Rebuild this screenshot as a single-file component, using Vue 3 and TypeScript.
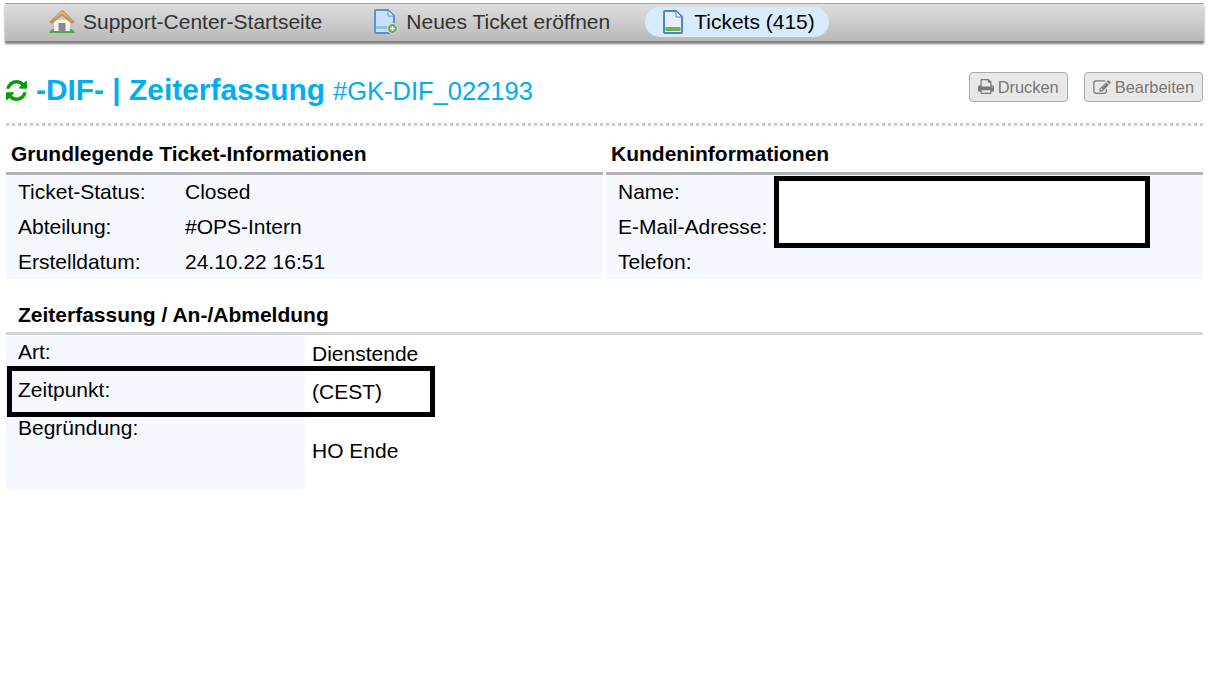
<template>
  <div class="page">
    <nav class="nav">
      <a class="nav-item">
        <svg class="nav-icon" viewBox="0 0 26 23" width="26" height="23">
          <path d="M0 23 q3 -5 6 -4 h14 q3 -1 6 4z" fill="#4fa84a" />
          <rect x="5" y="10" width="16" height="11" fill="#f7f5ef" />
          <rect x="9.500" y="13" width="7" height="9" fill="#86888a" />
          <path d="M13 0 h1 L26 12 L23 14 L13 6 L3 14 L0 12z" fill="#c4965c" />
          <path d="M13 1 L4 9.500 L13 3.500 L22 9.500z" fill="#dcb987" />
        </svg>
        <span>Support-Center-Startseite</span>
      </a>
      <a class="nav-item">
        <svg class="nav-icon" viewBox="0 0 24 25" width="24" height="25">
          <path d="M1 2 q0 -1 1 -1 H14 L20 7 V23 q0 1 -1 1 H2 q-1 0 -1 -1z" fill="#c9e0f7" stroke="#5d92d2" stroke-width="2" />
          <path d="M14 1 V7 H20z" fill="#f2f8fe" stroke="#5d92d2" />
          <rect x="2" y="17" width="17" height="3" fill="#97c0ea" />
          <circle cx="18.500" cy="19.500" r="5" fill="#6cae5c" stroke="#dff0da" />
          <path d="M18.500 17 V22 M16 19.500 H21" stroke="#fff" stroke-width="1.500" />
        </svg>
        <span>Neues Ticket eröffnen</span>
      </a>
      <a class="nav-item active">
        <svg class="nav-icon" viewBox="0 0 20 24" width="20" height="24">
          <path d="M1 2 q0 -1 1 -1 H13 L19 7 V22 q0 1 -1 1 H2 q-1 0 -1 -1z" fill="#e4f0fb" stroke="#4d84c4" stroke-width="2" />
          <path d="M13 1 V7 H19z" fill="#f8fbfe" stroke="#4d84c4" />
          <rect x="2.500" y="17" width="15" height="4" fill="#76ad4e" />
        </svg>
        <span>Tickets ({{ ticketCount }})</span>
      </a>
    </nav>

    <header class="title-row">
      <h1 class="title">
        <svg class="refresh" viewBox="0 0 1536 1536" width="21" height="21">
          <path fill="#0a9a0a" d="M1511 928q0 5-1 7-64 268-268 434.500t-478 166.500q-146 0-282.500-55t-243.500-157l-129 129q-19 19-45 19t-45-19-19-45v-448q0-26 19-45t45-19h448q26 0 45 19t19 45-19 45l-137 137q71 66 161 102t187 36q134 0 250-65t186-179q11-17 53-117 8-23 30-23h192q13 0 22.500 9.500t9.500 22.500zm25-800v448q0 26-19 45t-45 19h-448q-26 0-45-19t-19-45 19-45l138-138q-148-137-349-137-134 0-250 65t-186 179q-11 17-53 117-8 23-30 23h-199q-13 0-22.500-9.500t-9.500-22.500v-7q65-268 270-434.500t480-166.500q146 0 284 55.500t245 156.500l130-129q19-19 45-19t45 19 19 45z" />
        </svg>
        <span>-DIF- | Zeiterfassung</span>
        <small>#GK-DIF_022193</small>
      </h1>
      <div class="actions">
        <button class="btn">
          <svg viewBox="0 0 1664 1536" width="16" height="15">
            <path fill="#777" d="M384 1408h896v-256H384zm0-640h896V384h-160q-40 0-68-28t-28-68V128H384zm1152 64q0-26-19-45t-45-19-45 19-19 45 19 45 45 19 45-19 19-45zm128 0v416q0 13-9.500 22.500T1632 1280h-224v160q0 40-28 68t-68 28H352q-40 0-68-28t-28-68v-160H32q-13 0-22.500-9.500T0 1248V832q0-79 56.500-135.500T192 640h64V96q0-40 28-68t68-28h672q40 0 88 20t76 48l152 152q28 28 48 76t20 88v256h64q79 0 135.500 56.500T1664 832z" />
          </svg>
          Drucken
        </button>
        <button class="btn">
          <svg viewBox="0 0 1792 1536" width="18" height="15">
            <path fill="#777" d="M888 1184l116-116-152-152-116 116v56h96v96zm440-720q-16-16-33 1L945 815q-17 17-1 33t33-1l350-350q17-17 1-33zm80 594v190q0 119-84.500 203.500T1120 1536H288q-119 0-203.500-84.500T0 1248V416q0-119 84.500-203.500T288 128h832q63 0 117 25 15 7 18 23 3 17-9 29l-49 49q-14 14-32 8-23-6-45-6H288q-66 0-113 47t-47 113v832q0 66 47 113t113 47h832q66 0 113-47t47-113v-126q0-13 9-22l64-64q15-15 35-7t20 29zm-96-738l288 288-672 672H640v-288zm444 132l-92 92-288-288 92-92q28-28 68-28t68 28l152 152q28 28 28 68t-28 68z" />
          </svg>
          Bearbeiten
        </button>
      </div>
    </header>

    <div class="dots"></div>

    <section class="info-grid">
      <div v-for="block in infoBlocks" :key="block.title" class="info-block">
        <h2 class="info-title">{{ block.title }}</h2>
        <div class="info-body">
          <div v-for="row in block.rows" :key="row.label" class="info-row">
            <span class="info-label" :style="{ width: block.labelWidth + 'px' }">{{ row.label }}</span>
            <span>{{ row.value }}</span>
          </div>
        </div>
      </div>
      <div class="redact redact-contact"></div>
    </section>

    <section class="form-section">
      <h2 class="form-title">Zeiterfassung / An-/Abmeldung</h2>
      <div class="form-body">
        <div class="form-row">
          <div class="form-label">Art:</div>
          <div class="form-value">Dienstende</div>
        </div>
        <div class="form-row">
          <div class="form-label">Zeitpunkt:</div>
          <div class="form-value">(CEST)</div>
        </div>
        <div class="form-row tall">
          <div class="form-label">Begründung:</div>
          <div class="form-value">HO Ende</div>
        </div>
        <div class="redact redact-time"></div>
      </div>
    </section>
  </div>
</template>

<script setup lang="ts">
const ticketCount = 415

const infoBlocks = [
  {
    title: 'Grundlegende Ticket-Informationen',
    labelWidth: 167,
    rows: [
      { label: 'Ticket-Status:', value: 'Closed' },
      { label: 'Abteilung:', value: '#OPS-Intern' },
      { label: 'Erstelldatum:', value: '24.10.22 16:51' },
    ],
  },
  {
    title: 'Kundeninformationen',
    labelWidth: 160,
    rows: [
      { label: 'Name:', value: '' },
      { label: 'E-Mail-Adresse:', value: '' },
      { label: 'Telefon:', value: '' },
    ],
  },
]
</script>

<style>
html,
body {
  margin: 0;
  background: #fff;
}
</style>

<style scoped>
.page {
  width: 1209px;
  height: 686px;
  overflow: hidden;
  font-family: "Liberation Sans", Arial, sans-serif;
  font-size: 21px;
  color: #000;
  box-sizing: border-box;
  padding: 3px 6px 0;
}

.nav {
  display: flex;
  align-items: center;
  height: 38px;
  margin: 0 -1px;
  padding: 0 0 2px 34px;
  box-sizing: border-box;
  border-top: 1px solid #a5a5a5;
  background: linear-gradient(#dedede, #b9b9b9);
  box-shadow: 0 3px 2px #808080;
}

.nav-item {
  display: flex;
  align-items: center;
  gap: 8px;
  height: 30px;
  padding: 0 14px 0 10px;
  margin-right: 28px;
  color: #333;
  border-radius: 15px;
}

.nav-item.active {
  gap: 11px;
  background: #d8ebfd;
  color: #000;
  margin-left: -7px;
  padding: 0 14px 0 18px;
}

.nav-icon {
  flex: none;
}

.title-row {
  display: flex;
  justify-content: space-between;
  align-items: flex-start;
  margin-top: 29px;
  height: 53px;
}

.title {
  display: flex;
  align-items: baseline;
  margin: 0;
  font-size: 29.9px;
  font-weight: bold;
  color: #00aeef;
  line-height: 40px;
}

.refresh {
  align-self: center;
  margin-right: 9px;
}

.title small {
  font-size: 25.5px;
  font-weight: normal;
  margin-left: 8px;
}

.actions {
  display: flex;
  gap: 16px;
  margin-top: 2px;
}

.btn {
  display: flex;
  align-items: center;
  gap: 4px;
  height: 30px;
  padding: 0 8px;
  font-family: inherit;
  font-size: 16.4px;
  color: #777;
  background: #e8e8e8;
  border: 1px solid #aaa;
  border-radius: 4px;
}

.btn svg {
  margin-top: -2px;
}

.dots {
  border-top: 3px dotted #ccc;
}

.info-grid {
  position: relative;
  display: grid;
  grid-template-columns: 597px 597px;
  gap: 3px;
  margin-top: 13px;
}

.info-title {
  margin: 0;
  height: 33px;
  padding-left: 5px;
  font-size: 21px;
  line-height: 30px;
  border-bottom: 3px solid #b3b5b8;
}

.info-body {
  background: #f5f9ff;
}

.info-row {
  display: flex;
  align-items: center;
  height: 34.67px;
  padding-left: 12px;
}

.info-label {
  flex: none;
}

.redact {
  position: absolute;
  box-sizing: border-box;
  border: 5px solid #000;
}

.redact-contact {
  left: 768px;
  top: 37px;
  width: 376px;
  height: 72px;
  background: #fff;
}

.form-section {
  margin-top: 18px;
}

.form-title {
  margin: 0;
  padding-left: 12px;
  height: 35px;
  font-size: 21px;
  line-height: 36px;
  border-bottom: 3px solid #d5d6d8;
}

.form-body {
  position: relative;
}

.form-row {
  display: flex;
  height: 38px;
}

.form-row.tall {
  height: 79px;
}

.form-label {
  width: 299px;
  flex: none;
  padding: 5px 0 0 12px;
  box-sizing: border-box;
  background: #f5f9ff;
}

.form-value {
  padding: 7px 0 0 7px;
}

.form-row.tall .form-value {
  padding-top: 28px;
}

.redact-time {
  left: 1px;
  top: 31px;
  width: 428px;
  height: 51px;
}
</style>
